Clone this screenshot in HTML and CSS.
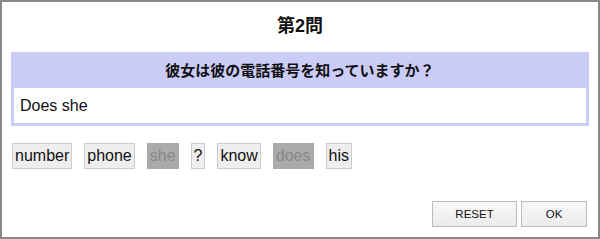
FILE: index.html
```html
<!DOCTYPE html>
<html lang="ja">
<head>
  <meta charset="UTF-8">
  <meta name="viewport" content="width=device-width, initial-scale=1.0">
  <title>並べ替え問題</title>
  <link rel="stylesheet" href="styles.css">
</head>
<body>
  <div class="quiz">
    <h1 class="quiz-title">第2問</h1>

    <div class="question">
      <div class="question-text">彼女は彼の電話番号を知っていますか？</div>
      <div class="answer">Does she</div>
    </div>

    <div class="words">
      <span class="word">number</span>
      <span class="word">phone</span>
      <span class="word used">she</span>
      <span class="word">?</span>
      <span class="word">know</span>
      <span class="word used">does</span>
      <span class="word">his</span>
    </div>

    <div class="actions">
      <button class="btn btn-reset">RESET</button>
      <button class="btn btn-ok">OK</button>
    </div>
  </div>
</body>
</html>
```

FILE: styles.css
```css
html, body {
  margin: 0;
  padding: 0;
}

body {
  font-family: "Liberation Sans", Arial, "Noto Sans CJK JP", sans-serif;
  color: #111;
  background: #fff;
}

.quiz {
  box-sizing: border-box;
  width: 600px;
  height: 239px;
  border: 2px solid #888;
  padding: 0 9px 0 9px;
  display: flex;
  flex-direction: column;
}

.quiz-title {
  margin: 13px 0 15px;
  font-size: 18px;
  line-height: 22px;
  text-align: center;
  font-weight: bold;
}

/* 問題文と回答欄 */
.question {
  background-color: #ccccf8;
  padding: 0 3px 3px;
}

.question-text {
  height: 36px;
  line-height: 36px;
  text-align: center;
  font-size: 15px;
  font-weight: bold;
  font-family: "Noto Sans CJK JP", sans-serif;
}

.answer {
  height: 35px;
  line-height: 35px;
  background: #fff;
  padding-left: 6px;
  font-size: 16px;
}

.words {
  display: flex;
  gap: 12px;
  margin: 17px 0 0 1px;
}

.word {
  display: inline-block;
  height: 18px;
  line-height: 18px;
  padding: 3px 2px;
  font-size: 16px;
  background: #eee;
  border: 1px solid #ccc;
  color: #111;
}

.word.used {
  background: #aaa;
  border-color: #aaa;
  color: #888;
}

.actions {
  margin-top: auto;
  margin-bottom: 10px;
  display: flex;
  justify-content: flex-end;
  gap: 4px;
  padding-right: 2px;
}

.btn {
  height: 26px;
  font-family: "Liberation Sans", Arial, sans-serif;
  font-size: 11.5px;
  color: #111;
  background: linear-gradient(#f8f8f8, #ececec);
  border: 1px solid #bbb;
  border-radius: 0;
  padding: 0;
  cursor: pointer;
}

.btn-reset {
  width: 85px;
}

.btn-ok {
  width: 66px;
}
```
